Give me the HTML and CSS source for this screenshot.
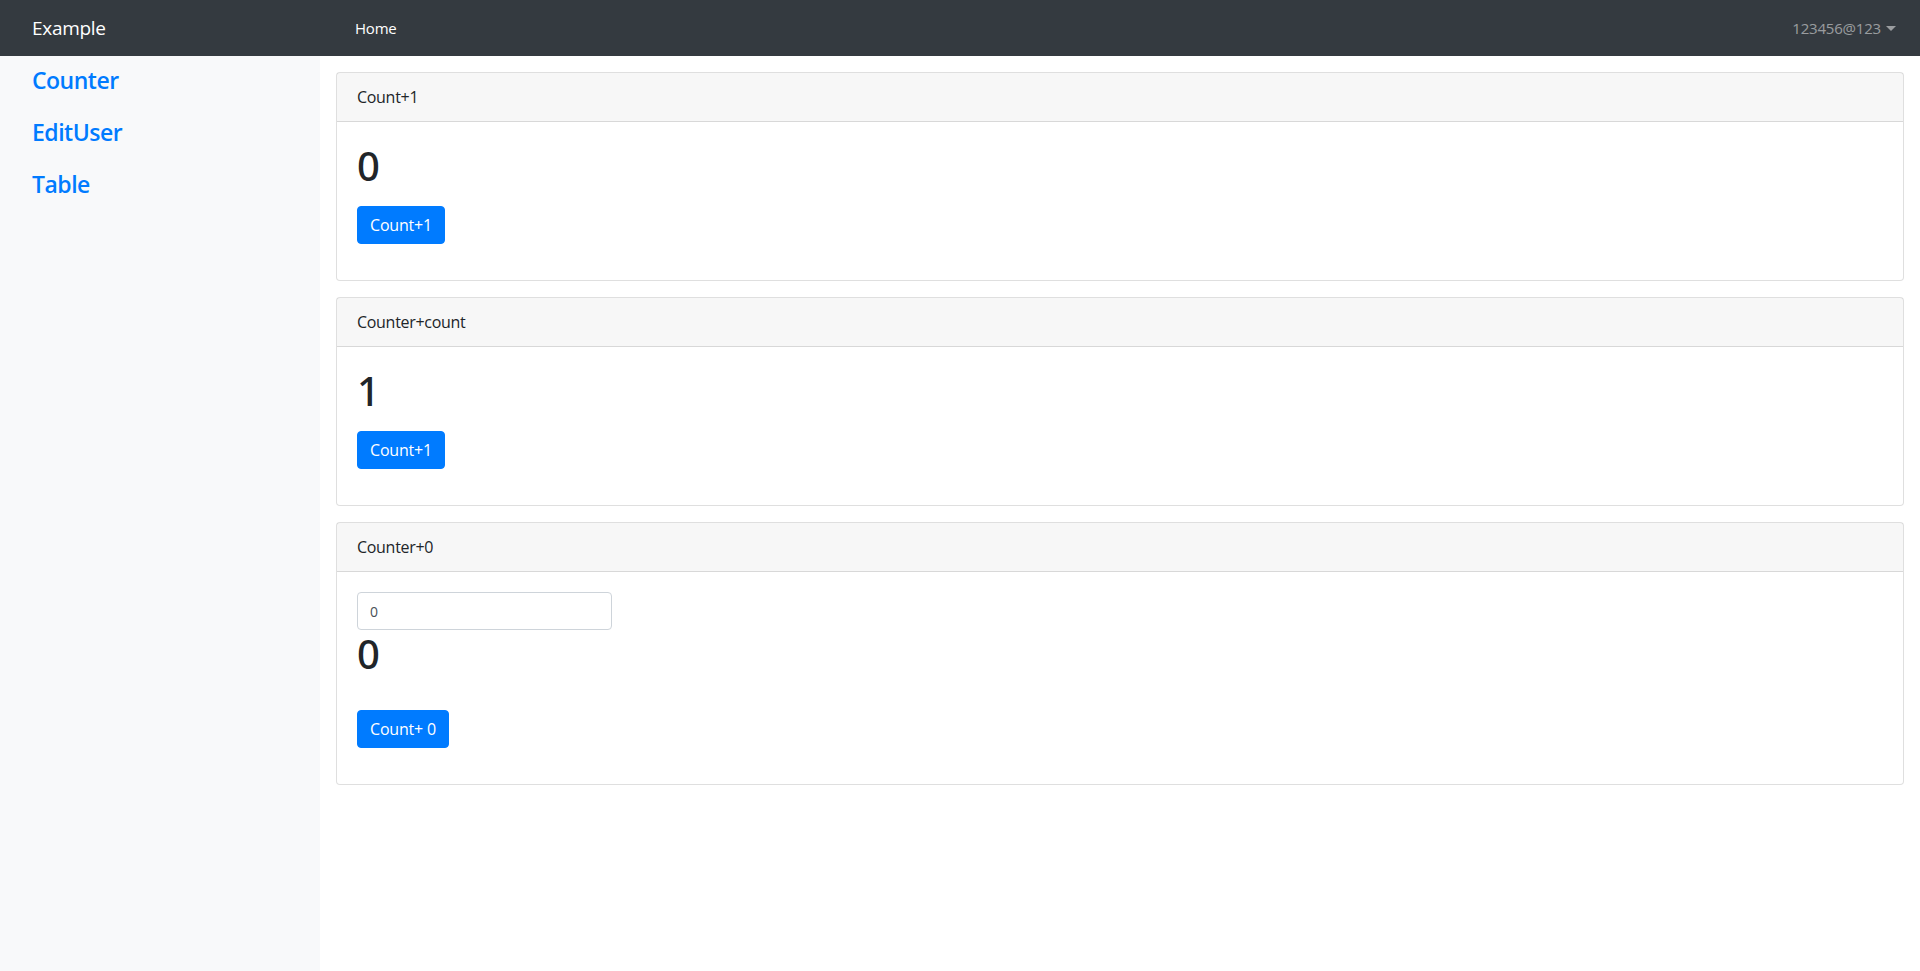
FILE: index.html
```html
<!DOCTYPE html>
<html lang="en">
<head>
<meta charset="utf-8">
<title>Example</title>
<link rel="stylesheet" href="styles.css">
</head>
<body>
<header class="navbar">
  <div class="brand">Example</div>
  <nav class="nav-links"><a class="nav-link" href="#">Home</a></nav>
  <div class="user-menu">123456@123<span class="caret"></span></div>
</header>
<div class="layout">
  <aside class="sidebar">
    <a class="side-link" href="#">Counter</a>
    <a class="side-link" href="#">EditUser</a>
    <a class="side-link" href="#">Table</a>
  </aside>
  <main class="main">
    <section class="card">
      <div class="card-header">Count+1</div>
      <div class="card-body">
        <h1 class="count">0</h1>
        <button class="btn">Count+1</button>
      </div>
    </section>
    <section class="card">
      <div class="card-header">Counter+count</div>
      <div class="card-body">
        <h1 class="count">1</h1>
        <button class="btn">Count+1</button>
      </div>
    </section>
    <section class="card">
      <div class="card-header">Counter+0</div>
      <div class="card-body">
        <input class="field" type="text" value="0">
        <h1 class="count count-tight">0</h1>
        <button class="btn">Count+ 0</button>
      </div>
    </section>
  </main>
</div>
</body>
</html>
```

FILE: styles.css
```css
* { box-sizing: border-box; }
html, body { margin: 0; padding: 0; }
body {
  font-family: "Open Sans", "Noto Sans", sans-serif;
  font-size: 16px;
  color: #212529;
  background: #fff;
  height: 971px;
  display: flex;
  flex-direction: column;
}
.navbar {
  height: 56px;
  flex: none;
  background: #343a40;
  display: flex;
  align-items: center;
  padding: 0 24px 0 32px;
}
.brand {
  width: 323px;
  color: #fff;
  font-size: 19px;
  letter-spacing: -0.3px;
}
.nav-links { flex: 1; display: flex; }
.nav-link {
  color: #fff;
  text-decoration: none;
  font-size: 15px;
  letter-spacing: -0.2px;
}
.user-menu {
  color: rgba(255,255,255,.5);
  font-size: 15px;
  letter-spacing: -0.2px;
  display: flex;
  align-items: center;
}
.caret {
  display: inline-block;
  margin-left: 5px;
  width: 0; height: 0;
  border-top: 5px solid rgba(255,255,255,.5);
  border-left: 5px solid transparent;
  border-right: 5px solid transparent;
}
.layout { flex: 1; display: flex; }
.sidebar {
  width: 320px;
  flex: none;
  background: #f8f9fa;
  display: flex;
  flex-direction: column;
}
.side-link {
  color: #007bff;
  text-decoration: none;
  font-size: 23px;
  font-weight: 600;
  letter-spacing: -0.5px;
  line-height: 36px;
  padding: 6px 32px 10px;
}
.main {
  flex: 1;
  padding: 16px 16px 0 16px;
}
.card {
  border: 1px solid rgba(0,0,0,.125);
  border-radius: 4px;
  margin-bottom: 16px;
  background: #fff;
}
.card-header {
  background: rgba(0,0,0,.03);
  border-bottom: 1px solid rgba(0,0,0,.125);
  padding: 12px 20px;
  line-height: 24px;
  font-size: 16px;
  letter-spacing: -0.3px;
}
.card-body {
  padding: 20px 20px 36px;
}
.count {
  margin: 0 0 16px;
  font-family: "Noto Sans", "Open Sans", sans-serif;
  font-size: 40px;
  font-weight: 500;
  line-height: 48px;
}
.count-tight { margin-bottom: 32px; }
.btn {
  display: block;
  height: 38px;
  padding: 0 12px;
  border: 1px solid #007bff;
  border-radius: 4px;
  background: #007bff;
  color: #fff;
  font-family: inherit;
  font-size: 16px;
  letter-spacing: -0.2px;
}
.field {
  display: block;
  width: 255px;
  height: 38px;
  border: 1px solid #ced4da;
  border-radius: 4px;
  padding: 0 12px;
  font-family: inherit;
  font-size: 14px;
  color: #495057;
}
```
